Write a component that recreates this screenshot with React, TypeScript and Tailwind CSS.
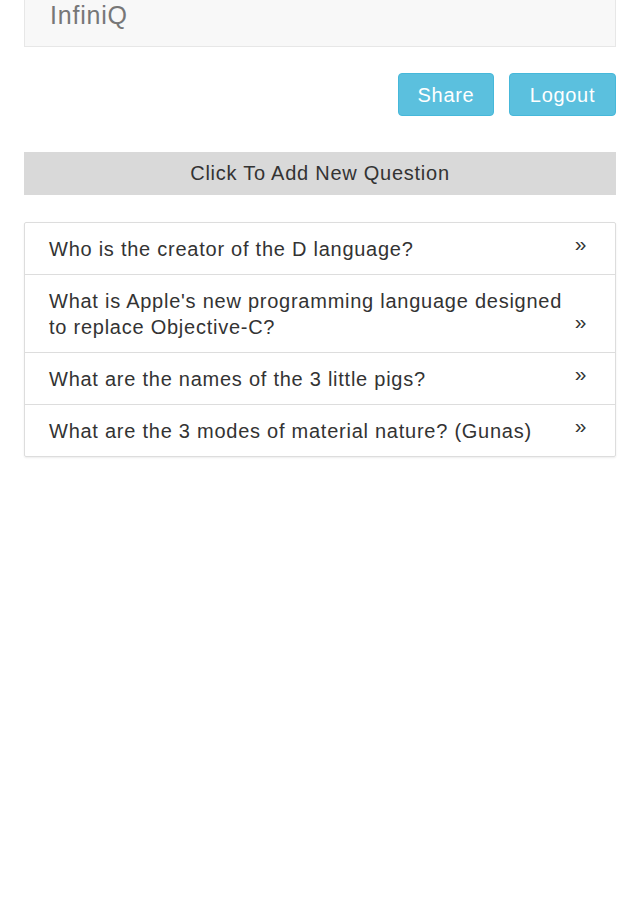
import React from 'react';

const questions = [
  'Who is the creator of the D language?',
  "What is Apple's new programming language designed to replace Objective-C?",
  'What are the names of the 3 little pigs?',
  'What are the 3 modes of material nature? (Gunas)',
];

export default function App() {
  return (
    <div className="min-h-[920px] bg-white px-[24px] font-['Liberation_Sans',Arial,sans-serif] text-[#333]">
      {/* Brand bar (scrolled partly off the top) */}
      <div className="h-[47px] border-x border-b border-[#e7e7e7] bg-[#f8f8f8] pl-[25px]">
        <span className="text-[25px] leading-[30px] tracking-[0.8px] text-[#777]">InfiniQ</span>
      </div>

      {/* Actions */}
      <div className="mt-[26px] flex justify-end gap-[15px]">
        <button className="h-[43px] w-[96px] rounded-[4px] border border-[#46b8da] bg-[#5bc0de] text-[20px] tracking-[0.7px] text-white">
          Share
        </button>
        <button className="h-[43px] w-[107px] rounded-[4px] border border-[#46b8da] bg-[#5bc0de] text-[20px] tracking-[0.7px] text-white">
          Logout
        </button>
      </div>

      {/* Add question */}
      <button className="mt-[36px] flex h-[43px] w-full items-center justify-center bg-[#d9d9d9] pb-[1px] text-[20px] tracking-[0.75px] text-[#333]">
        Click To Add New Question
      </button>

      {/* Question list */}
      <ul className="mt-[27px] rounded-[2px] border border-[#ddd] shadow-[0_1px_2px_rgba(0,0,0,0.08)]">
        {questions.map((q, i) => (
          <li
            key={i}
            className={`flex items-end gap-[4px] pb-[12px] pl-[24px] pr-[28px] pt-[13px] ${i > 0 ? 'border-t border-[#ddd]' : ''}`}
          >
            <span className="flex-1 text-[20px] leading-[26px] tracking-[0.75px]">{q}</span>
            <span className="flex h-[26px] w-[13px] items-start justify-center text-[21px] leading-[16px] text-[#333]">
              »
            </span>
          </li>
        ))}
      </ul>
    </div>
  );
}
